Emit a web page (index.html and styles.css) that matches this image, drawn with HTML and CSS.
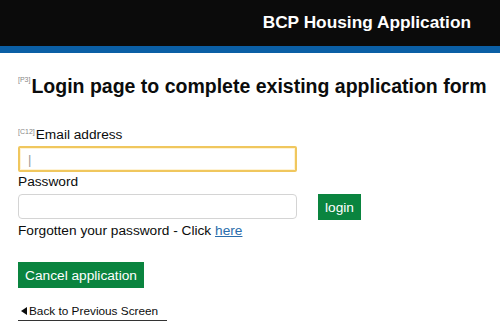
FILE: index.html
```html
<html>

<head>
  <link rel="stylesheet" href="styles.css">
</head>

<body>
  <div class="header">
    <span class="header-title">BCP Housing Application</span>
  </div>

  <div class="content">
    <h1 class="page-title"><sup class="ref">[P3]</sup>Login page to complete existing application form</h1>

    <form class="login-form">
      <label class="field-label" for="email"><sup class="ref">[C12]</sup>Email address</label>
      <input class="field-input focused" id="email" type="text" placeholder="|">

      <label class="field-label" for="password">Password</label>
      <div class="password-row">
        <input class="field-input" id="password" type="password">
        <button class="btn btn-login" type="button">login</button>
      </div>

      <p class="forgotten">Forgotten your password - Click <a href="#">here</a></p>

      <button class="btn btn-cancel" type="button">Cancel application</button>
    </form>

    <a class="back-link" href="#"><span class="back-arrow"></span>Back to Previous Screen</a>
  </div>
</body>

</html>
```

FILE: styles.css
```css
body {
  margin: 0;
  font-family: "Liberation Sans", Arial, sans-serif;
  color: #0b0c0c;
  background: #fff;
}

/* top bar */
.header {
  height: 46px;
  background: #0b0b0b;
  border-bottom: 7px solid #0b5fa5;
  display: flex;
  justify-content: flex-end;
  align-items: center;
  padding-right: 29px;
}

.header-title {
  color: #fff;
  font-size: 17.3px;
  font-weight: bold;
  margin-top: -1px;
}

.content {
  padding-left: 18px;
}

.page-title {
  margin: 22px 0 0;
  font-size: 19.5px;
  line-height: 23px;
  font-weight: bold;
}

.ref {
  font-size: 7px;
  font-weight: normal;
  color: #888;
  vertical-align: top;
  line-height: 10px;
  margin-right: 1px;
}

.login-form {
  margin-top: 29px;
}

.field-label {
  display: block;
  font-size: 13.7px;
  line-height: 16px;
}

.field-input {
  display: block;
  box-sizing: border-box;
  width: 279px;
  height: 25px;
  margin: 4px 0 0;
  padding: 0 8px;
  border: 1px solid #d4d4d4;
  border-radius: 4px;
  font-size: 13px;
  font-family: inherit;
  outline: none;
}

.field-input.focused {
  height: 26px;
  margin-top: 3px;
  border: 2px solid #f0c75e;
  border-radius: 2px;
  box-shadow: inset 0 0 0 1px #fff3d4;
}

.field-input::placeholder {
  color: #999;
}

.field-input.focused + .field-label {
  margin-top: 2px;
}

.password-row {
  display: flex;
  align-items: flex-start;
  gap: 21px;
}

.btn {
  border: none;
  background: #0a843f;
  color: #fff;
  font-family: inherit;
  font-size: 13.7px;
  cursor: pointer;
}

.btn-login {
  margin-top: 4px;
  height: 26px;
  width: 43px;
  padding: 0;
}

.forgotten {
  margin: 3px 0 0;
  font-size: 13.7px;
  line-height: 16px;
}

.forgotten a {
  color: #2b6dac;
}

.btn-cancel {
  display: block;
  margin-top: 23px;
  height: 26px;
  width: 126px;
  padding: 0;
}

.back-link {
  display: flex;
  align-items: center;
  margin-top: 13px;
  width: 149px;
  padding-bottom: 2px;
  border-bottom: 1px solid #333;
  font-size: 11.8px;
  line-height: 14px;
  color: #0b0c0c;
  text-decoration: none;
}

.back-arrow {
  width: 0;
  height: 0;
  margin: 0 2px 0 3px;
  border-top: 4px solid transparent;
  border-bottom: 4px solid transparent;
  border-right: 6px solid #0b0c0c;
}
```
